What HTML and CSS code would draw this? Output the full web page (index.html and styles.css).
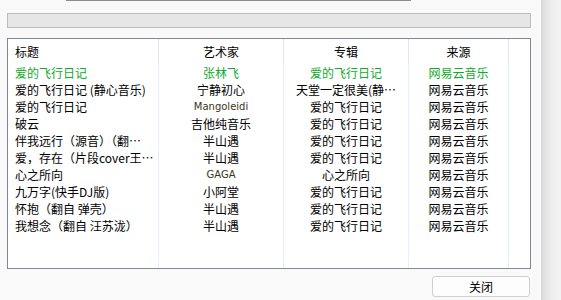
FILE: index.html
```html
<!DOCTYPE html>
<html lang="zh-CN">
<head>
<meta charset="utf-8">
<link rel="stylesheet" href="styles.css">
</head>
<body>
<div class="window">
  <div class="topline"></div>
  <div class="progress"></div>
  <div class="list">
    <div class="col col-title">
      <div class="head">标题</div>
      <div class="body">
        <div class="cell green">爱的飞行日记</div>
        <div class="cell">爱的飞行日记 (静心音乐)</div>
        <div class="cell">爱的飞行日记</div>
        <div class="cell">破云</div>
        <div class="cell">伴我远行（源音）（翻…</div>
        <div class="cell">爱，存在（片段cover王…</div>
        <div class="cell">心之所向</div>
        <div class="cell">九万字(快手DJ版)</div>
        <div class="cell">怀抱（翻自 弹壳）</div>
        <div class="cell">我想念（翻自 汪苏泷）</div>
      </div>
    </div>
    <div class="col col-artist">
      <div class="head">艺术家</div>
      <div class="body">
        <div class="cell green">张林飞</div>
        <div class="cell">宁静初心</div>
        <div class="cell latin">Mangoleidi</div>
        <div class="cell">吉他纯音乐</div>
        <div class="cell">半山遇</div>
        <div class="cell">半山遇</div>
        <div class="cell latin">GAGA</div>
        <div class="cell">小阿堂</div>
        <div class="cell">半山遇</div>
        <div class="cell">半山遇</div>
      </div>
    </div>
    <div class="col col-album">
      <div class="head">专辑</div>
      <div class="body">
        <div class="cell green">爱的飞行日记</div>
        <div class="cell">天堂一定很美(静…</div>
        <div class="cell">爱的飞行日记</div>
        <div class="cell">爱的飞行日记</div>
        <div class="cell">爱的飞行日记</div>
        <div class="cell">爱的飞行日记</div>
        <div class="cell">心之所向</div>
        <div class="cell">爱的飞行日记</div>
        <div class="cell">爱的飞行日记</div>
        <div class="cell">爱的飞行日记</div>
      </div>
    </div>
    <div class="col col-source">
      <div class="head">来源</div>
      <div class="body">
        <div class="cell green">网易云音乐</div>
        <div class="cell">网易云音乐</div>
        <div class="cell">网易云音乐</div>
        <div class="cell">网易云音乐</div>
        <div class="cell">网易云音乐</div>
        <div class="cell">网易云音乐</div>
        <div class="cell">网易云音乐</div>
        <div class="cell">网易云音乐</div>
        <div class="cell">网易云音乐</div>
        <div class="cell">网易云音乐</div>
      </div>
    </div>
    <div class="col col-rest">
      <div class="head"></div>
      <div class="body"></div>
    </div>
  </div>
  <div class="footer">
    <button class="btn">关闭</button>
  </div>
</div>
<div class="shadow"></div>
</body>
</html>
```

FILE: styles.css
```css
html, body {
  margin: 0;
  padding: 0;
}
body {
  width: 561px;
  height: 300px;
  overflow: hidden;
  display: flex;
  background: #f0f0f0;
  font-family: "Noto Sans CJK SC", "Noto Sans", sans-serif;
  font-size: 12px;
  color: #000;
}
.window {
  width: 541px;
  height: 300px;
  background: #f9f9f9;
  display: flex;
  flex-direction: column;
  padding-left: 7px;
  box-sizing: border-box;
}
.shadow {
  width: 20px;
  height: 300px;
  background: linear-gradient(to right, #d6d6d6 0px, #e4e4e4 4px, #efefef 12px, #f3f3f3 20px);
}
.topline {
  margin-left: 59px;
  width: 345px;
  height: 1px;
  background: #8c8c8c;
}
.progress {
  margin-top: 12px;
  width: 524px;
  height: 15px;
  box-sizing: border-box;
  border: 1px solid #bcbcbc;
  background: #e6e6e6;
}
.list {
  margin-top: 10px;
  width: 524px;
  height: 231px;
  box-sizing: border-box;
  border: 1px solid #828790;
  background: #fff;
  display: flex;
}
.col {
  display: flex;
  flex-direction: column;
}
.col-title { width: 151px; }
.col-artist { width: 125px; }
.col-album { width: 125px; }
.col-source { width: 100px; }
.col-rest { flex: 1; }
.head {
  height: 25px;
  line-height: 25px;
  box-sizing: border-box;
  border-right: 1px solid #e5e5e5;
  text-align: center;
  white-space: nowrap;
}
.body {
  flex: 1;
  border-right: 1px solid #e6eefb;
}
.col-rest .head, .col-rest .body {
  border-right: none;
}
.col-title .head,
.col-title .cell {
  text-align: left;
  padding-left: 7px;
}
.cell {
  height: 17px;
  line-height: 17px;
  text-align: center;
  white-space: nowrap;
  overflow: hidden;
}
.green {
  color: #0fab2c;
}
.latin {
  font-family: "DejaVu Sans", sans-serif;
  font-size: 10px;
  color: #3b3420;
}
.footer {
  margin-top: 7px;
  display: flex;
  padding-left: 425px;
}
.btn {
  width: 98px;
  height: 21px;
  padding: 0;
  box-sizing: border-box;
  border: 1px solid #d0d0d0;
  border-radius: 3px;
  background: #fdfdfd;
  font-family: "Noto Sans CJK SC", sans-serif;
  font-size: 12px;
  color: #000;
  line-height: 19px;
}
```
